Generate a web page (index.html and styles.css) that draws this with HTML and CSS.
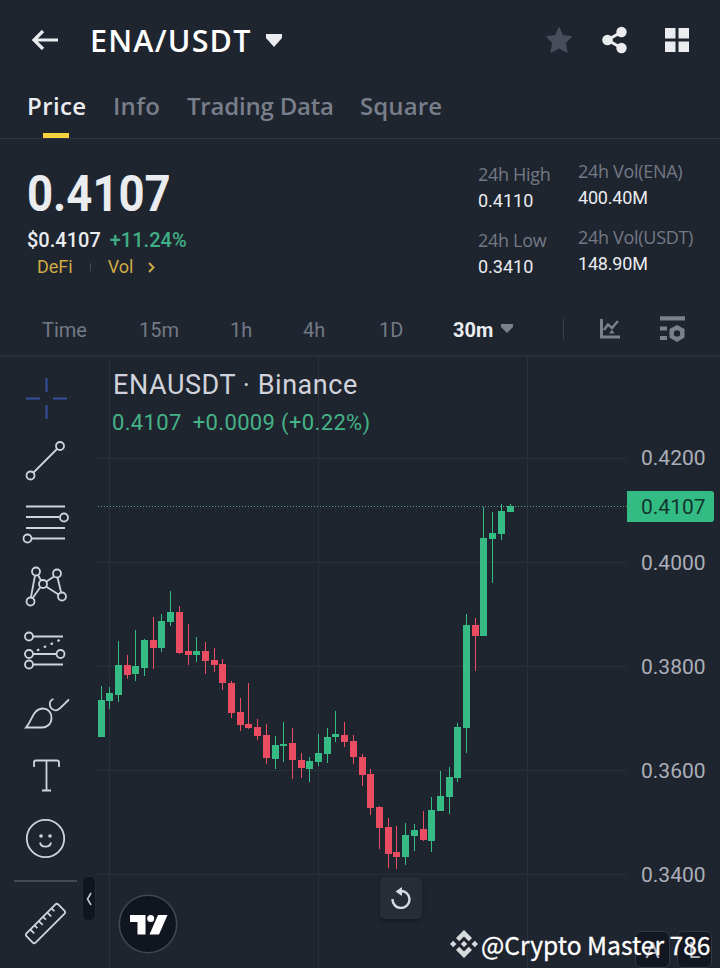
FILE: index.html
```html
<!DOCTYPE html>
<html lang="en">
<head>
  <meta charset="UTF-8" />
  <meta name="viewport" content="width=device-width, initial-scale=1" />
  <title>ENA/USDT</title>
  <link rel="stylesheet" href="styles.css">
</head>
<body>
  <header class="top-bar">
    <svg class="back" viewBox="0 0 28 20" aria-label="Back"><path d="M12 1 L3 10 L12 19 M3 10 H27" /></svg>
    <h1>ENA/USDT</h1>
    <svg class="caret" viewBox="0 0 16 13" aria-hidden="true"><path d="M0 0H16V4L8 13L0 4Z" /></svg>
    <div class="actions">
      <svg class="star" viewBox="0 0 28 28"><path d="M14 2 L17.5 9.8 L26 10.7 L20 16.6 L21.8 26 L14 21.5 L6.2 26 L8 16.6 L2 10.7 L10.5 9.8Z" /></svg>
      <svg class="share" viewBox="0 0 28 28"><path d="M20.5 6 L6.500 14 L20.500 22" /><circle cx="6.500" cy="14" r="5.300" /><circle cx="20.500" cy="6" r="5.200" /><circle cx="20.500" cy="22" r="5.200" /></svg>
      <svg class="apps" viewBox="0 0 24 24"><path d="M0 0H10.500V10.500H0ZM13.500 0H24V10.500H13.500ZM0 13.500H10.500V24H0ZM13.500 13.500H24V24H13.500Z" /></svg>
    </div>
  </header>

  <nav class="tabs">
    <a class="tab active">Price</a>
    <a class="tab info">Info</a>
    <a class="tab trading">Trading Data</a>
    <a class="tab square">Square</a>
  </nav>

  <section class="summary">
    <div class="quote">
      <div class="price">0.4107</div>
      <div class="change"><span>$0.4107</span><span class="up">+11.24%</span></div>
      <div class="tags">
        <span>DeFi</span><i></i><span>Vol</span>
        <svg viewBox="0 0 7 11"><path d="M1 1 L5.500 5.500 L1 10" /></svg>
      </div>
    </div>
    <dl class="stats stats-price">
      <dt>24h High</dt><dd>0.4110</dd>
      <dt>24h Low</dt><dd>0.3410</dd>
    </dl>
    <dl class="stats stats-volume">
      <dt>24h Vol(ENA)</dt><dd>400.40M</dd>
      <dt>24h Vol(USDT)</dt><dd>148.90M</dd>
    </dl>
  </section>

  <nav class="intervals">
    <a>Time</a>
    <a>15m</a>
    <a>1h</a>
    <a>4h</a>
    <a>1D</a>
    <a class="selected">30m</a>
    <svg class="small-caret" viewBox="0 0 12 9"><path d="M0 0H12V3L6 9L0 3Z" /></svg>
    <i class="divider"></i>
    <svg class="chart-icon" viewBox="0 0 20 20"><path d="M1.500 0V18H20" /><path class="thin" d="M4 11L8 5.500L12 9L18 2" /><path class="fill" d="M9 14.500L12 10.500L14.500 14.500Z" /></svg>
    <svg class="settings-icon" viewBox="0 0 25 26"><path d="M0 2.300H25M0 12.500H7M0 22H7" /><path class="nut" d="M17 9L24.500 13V21.500L17 26L9.500 21.500V13Z" /><circle cx="17" cy="17.400" r="3.200" /></svg>
  </nav>

  <main class="chart">
    <aside class="tools">
      <svg viewBox="0 0 100 611">
        <path class="cross" d="M46.500 21V35M46.500 48V62M26 41.500H40M53 41.500H67" />
        <!-- trend line -->
        <path d="M33.500 115.500L57.500 91.500" /><circle cx="30.500" cy="118.500" r="4" /><circle cx="60" cy="89" r="4" />
        <!-- fib retracement -->
        <path d="M26 149.500H65M26 160H59.500M26 171H65M31.500 181.500H65" /><circle cx="64" cy="160.500" r="4" /><circle cx="27.500" cy="181.500" r="4" />
        <!-- pattern -->
        <path d="M35 218.500L31 240M38 218L41 223.500M46.500 224.500L54 219.500M57.500 220.500L61 235M46 229.500L58.500 237.500M40.500 230L33 240.500" />
        <circle cx="36" cy="214.500" r="4" /><circle cx="57" cy="216.500" r="4" /><circle cx="43" cy="227" r="4" /><circle cx="30.500" cy="244.500" r="4" /><circle cx="62" cy="239.500" r="4" />
        <!-- position -->
        <path d="M33 279.500H63M33 297H56M33 307.500H63" /><path class="dots" d="M37 293.500L62 282" />
        <circle cx="29" cy="279.500" r="4" /><circle cx="29" cy="297" r="4" /><circle cx="60.500" cy="297" r="4" /><circle cx="29" cy="307.500" r="4" />
        <!-- brush -->
        <path d="M26 370.500C32 364 33 351.500 43 351.500C48 351.500 51.500 355.500 51.500 361C51.500 367 47 370.500 42 370.500Z" />
        <path d="M53.500 342C48 344 49 351 54 353C58 354.500 60 351 69 342.500" />
        <!-- text -->
        <path d="M34 410V405.500Q34 403.500 36 403.500H57Q59 403.500 59 405.500V410M46.500 403.500V433.500M42 433.500H51" />
        <!-- emoji -->
        <circle cx="45.500" cy="481.500" r="18.700" /><path d="M40 485.500C41 491 50 491 51 485.500" /><circle class="eye" cx="41" cy="479" r="1.800" /><circle class="eye" cx="50" cy="479" r="1.800" />
        <path class="rule" d="M14 524H77" />
        <!-- ruler -->
        <g transform="translate(45.500 566.500) rotate(-45)"><rect x="-22.500" y="-6.500" width="45" height="13" rx="2" /><path d="M-15 -6.500V-1M-9 -6.500V-2.500M-3 -6.500V-1M3 -6.500V-2.500M9 -6.500V-1M15 -6.500V-2.500" /></g>
      </svg>
    </aside>
    <div class="plot">
      <svg id="candles" viewBox="98 357 622 611">
        <path class="grid" d="M98 458.500H627M98 562.500H627M98 666.500H627M98 770.500H627M98 874.500H627M109.500 357V968M318.500 357V968M527.500 357V968" />
        <path class="last-line" d="M98 506.500H627" />
        <g id="series"></g>
        <g class="axis">
          <text x="641" y="465">0.4200</text>
          <text x="641" y="569.500">0.4000</text>
          <text x="641" y="673.500">0.3800</text>
          <text x="641" y="777.500">0.3600</text>
          <text x="641" y="882">0.3400</text>
        </g>
        <path class="last-tag" d="M627 491H711Q714 491 714 494V519Q714 522 711 522H627Z" />
        <text class="last-text" x="641" y="514">0.4107</text>
      </svg>
    </div>
    <div class="legend">
      <div class="symbol">ENAUSDT · Binance</div>
      <div class="ohlc"><span>0.4107</span><span>+0.0009 (+0.22%)</span></div>
    </div>
    <div class="collapse"><svg viewBox="0 0 6 14"><path d="M5 1L1.500 7L5 13" /></svg></div>
    <svg class="tv-logo" viewBox="0 0 60 60"><circle class="disc" cx="30" cy="30" r="28.700" /><path d="M12 21H27.500V40.500H19.500V28H12ZM40 21H49.500L41 40.500H31.500Z" /><circle cx="32.700" cy="24.500" r="3.500" /></svg>
    <button class="reset" aria-label="Reset chart"><svg viewBox="0 0 20 22"><path d="M1.500 12A8.500 8.500 0 1 0 9 4" /><path class="tip" d="M11 0V9L4.500 4.500Z" /></svg></button>
    <div class="scale-buttons"><span>A</span><span>L</span></div>
    <div class="watermark">
      <svg viewBox="0 0 28 28"><path d="M14 0L22 8L18.800 11.200L14 6.400L9.200 11.200L6 8ZM14 28L22 20L18.800 16.800L14 21.600L9.200 16.800L6 20ZM14 10.800L17.200 14L14 17.200L10.800 14ZM3.200 10.800L6.400 14L3.200 17.200L0 14ZM24.800 10.800L28 14L24.800 17.200L21.600 14Z" /></svg>
      <span>@Crypto Master 786</span>
    </div>
  </main>
  <script src="chart.js"></script>
</body>
</html>
```
FILE: styles.css
```css
* {
  margin: 0;
  padding: 0;
  box-sizing: border-box;
}
body {
  width: 720px;
  height: 968px;
  overflow: hidden;
  background: #1f252f;
  color: #eaecef;
  font-family: Roboto, sans-serif;
}
svg {
  display: block;
  flex: none;
}

/* Top bar */
.top-bar {
  display: flex;
  align-items: center;
  height: 80px;
  padding: 0 31px;
}
.back {
  width: 28px;
  height: 20px;
  fill: none;
  stroke: #eaecef;
  stroke-width: 3.2;
}
.top-bar h1 {
  width: 162px;
  margin: 0 0 0 31px;
  font: 600 30.5px/40px "Open Sans", sans-serif;
  letter-spacing: 1.2px;
  color: #fff;
  white-space: nowrap;
}
.caret {
  width: 16px;
  height: 13px;
  margin-left: 14px;
  fill: #eaecef;
}
.actions {
  display: flex;
  align-items: center;
  margin-left: auto;
}
.actions svg {
  width: 28px;
  height: 28px;
}
.star {
  fill: #474d5b;
  stroke: #474d5b;
  stroke-width: 1.5;
  stroke-linejoin: round;
}
.share {
  margin-left: 28px;
  fill: #eaecef;
}
.share path {
  fill: none;
  stroke: #eaecef;
  stroke-width: 3;
}
.actions .apps {
  width: 24px;
  height: 24px;
  margin-left: 36px;
  fill: #eaecef;
}

/* Tabs */
.tabs {
  display: flex;
  height: 59px;
  padding-left: 27px;
  gap: 27px;
  border-bottom: 1px solid #303640;
  font: 600 24px/52px "Open Sans", sans-serif;
  color: #787e8a;
  white-space: nowrap;
}
.tab.active {
  width: 59px;
  letter-spacing: 0.4px;
  color: #eaecef;
}
.tab.active::after {
  content: "";
  display: block;
  width: 26px;
  height: 5px;
  margin: 1px 0 0 16px;
  background: #f5d33f;
}
.tab.info {
  width: 47px;
  letter-spacing: 0.3px;
}
.tab.trading {
  width: 146px;
  letter-spacing: -0.2px;
}
.tab.square {
  letter-spacing: 0.1px;
}

/* Price summary */
.summary {
  display: flex;
  height: 164px;
  padding-left: 27px;
}
.quote {
  width: 451px;
  padding-top: 27px;
}
.price {
  font-size: 50px;
  font-weight: 700;
  line-height: 56px;
  transform: scaleX(0.91);
  transform-origin: left;
}
.change {
  display: flex;
  gap: 9px;
  margin-top: 6px;
  font-size: 20px;
  font-weight: 500;
  line-height: 24px;
}
.up {
  color: #3fae84;
}
.tags {
  display: flex;
  align-items: center;
  margin: 3px 0 0 10px;
  font-size: 18px;
  line-height: 24px;
  color: #cfab45;
}
.tags i {
  width: 1px;
  height: 8px;
  margin: 0 17px;
  background: #424954;
}
.tags svg {
  width: 7px;
  height: 11px;
  margin-left: 15px;
  fill: none;
  stroke: #cfab45;
  stroke-width: 2;
}
.stats {
  width: 100px;
  padding-top: 22px;
  white-space: nowrap;
}
.stats-volume {
  width: 130px;
  padding-top: 19px;
}
.stats dt {
  font: 18px/26px "Open Sans", sans-serif;
  letter-spacing: -0.3px;
  color: #737985;
}
.stats dd {
  margin-bottom: 13px;
  font-size: 18px;
  line-height: 27px;
}
.stats-volume dd {
  letter-spacing: -0.2px;
}

/* Interval picker */
.intervals {
  display: flex;
  align-items: center;
  height: 54px;
  padding-left: 42px;
  border-bottom: 2px solid #272e38;
  font-size: 20px;
  color: #737985;
}
.intervals a {
  padding-top: 2px;
}
.intervals a:nth-child(1) {
  width: 97px;
}
.intervals a:nth-child(2) {
  width: 91px;
}
.intervals a:nth-child(3) {
  width: 73px;
}
.intervals a:nth-child(4) {
  width: 76px;
}
.intervals a:nth-child(5) {
  width: 74px;
}
.intervals .selected {
  width: 48px;
  font-weight: 700;
  color: #eaecef;
}
.small-caret {
  width: 12px;
  height: 9px;
  margin-top: -2px;
  fill: #7b818c;
}
.divider {
  width: 1px;
  height: 21px;
  margin: 0 36px 0 50px;
  background: #3b424d;
}
.chart-icon {
  width: 20px;
  height: 20px;
  fill: none;
  stroke: #7b818c;
  stroke-width: 3;
}
.chart-icon .thin {
  stroke-width: 2.4;
}
.chart-icon .fill {
  fill: #7b818c;
  stroke: none;
}
.settings-icon {
  width: 25px;
  height: 26px;
  margin-left: 40px;
  fill: #1f252f;
  stroke: #7b818c;
  stroke-width: 4.2;
}
.settings-icon .nut {
  fill: #7b818c;
  stroke: none;
}
.settings-icon circle {
  stroke: none;
}

/* Chart */
.chart {
  position: relative;
  display: flex;
  height: 611px;
}
.tools {
  width: 98px;
}
.tools svg {
  width: 100px;
  height: 611px;
  fill: none;
  stroke: #d0d3dc;
  stroke-width: 1.8;
}
.tools .cross {
  stroke: #3450a0;
  stroke-width: 2;
}
.tools .dots {
  stroke-width: 2.2;
  stroke-dasharray: 2.5 5;
}
.tools .eye {
  fill: #d0d3dc;
  stroke: none;
}
.tools .rule {
  stroke: #434853;
  stroke-width: 2;
}
.plot svg {
  width: 622px;
  height: 611px;
}
.grid {
  stroke: #29303a;
  fill: none;
}
.last-line {
  stroke: #5a9c85;
  stroke-dasharray: 1 2;
}
.up-candle {
  fill: #37bb85;
}
.down-candle {
  fill: #ea4c62;
}
.axis text,
.last-text {
  font-size: 21px;
  fill: #acafb8;
}
.last-tag {
  fill: #33bb84;
}
.plot .last-text {
  fill: #13352f;
}
.legend {
  position: absolute;
  left: 112px;
  top: 12px;
  white-space: nowrap;
}
.symbol {
  padding-left: 1px;
  font-size: 27px;
  line-height: 32px;
  letter-spacing: 0.55px;
  color: #d0d3dc;
}
.ohlc {
  display: flex;
  gap: 11px;
  margin-top: 8px;
  font-size: 22px;
  line-height: 28px;
  letter-spacing: 0.35px;
  color: #45b287;
}
.collapse {
  position: absolute;
  left: 82px;
  top: 519px;
  display: flex;
  align-items: center;
  justify-content: center;
  width: 14px;
  height: 45px;
  border-radius: 6px;
  border: 1px solid #232a34;
  background: #10151f;
}
.collapse svg {
  width: 6px;
  height: 14px;
  fill: none;
  stroke: #c6c9d1;
  stroke-width: 1.6;
}
.tv-logo {
  position: absolute;
  left: 118px;
  top: 537px;
  width: 60px;
  height: 60px;
  fill: #fff;
}
.tv-logo .disc {
  fill: #10151f;
  stroke: #434651;
  stroke-width: 1.6;
}
.reset {
  position: absolute;
  left: 380px;
  top: 520px;
  display: flex;
  align-items: center;
  justify-content: center;
  width: 42px;
  height: 42px;
  border: 0;
  border-radius: 5px;
  background: #272d37;
  box-shadow: 0 2px 4px rgba(0, 0, 0, 0.35);
}
.reset svg {
  width: 20px;
  height: 22px;
  fill: none;
  stroke: #d9dbe2;
  stroke-width: 2.4;
}
.reset .tip {
  fill: #d9dbe2;
  stroke: none;
}
.scale-buttons {
  position: absolute;
  left: 635px;
  top: 574px;
  display: flex;
  gap: 7px;
}
.scale-buttons span {
  width: 35px;
  height: 37px;
  border: 1px solid #333844;
  border-radius: 6px;
  background: #121721;
  color: #b2b5be;
  font-size: 22px;
  line-height: 37px;
  text-align: center;
}
.watermark {
  position: absolute;
  left: 450px;
  top: 569px;
  display: flex;
  align-items: center;
  gap: 3px;
  font: 400 24.6px/36px "Noto Sans CJK SC", sans-serif;
  color: #fff;
  -webkit-text-stroke: 0.3px #fff;
  white-space: nowrap;
}
.watermark svg {
  width: 28px;
  height: 28px;
  fill: #d7d9dd;
}
```
FILE: chart.js
```js
// x, body top, body bottom, wick top, wick bottom, direction
const candles = [
  [101, 700, 737, 686, 737, 1], [109, 693, 701, 687, 709, 1], [118, 665, 695, 641, 702, 1],
  [127, 665, 675, 655, 679, 0], [135, 666, 674, 630, 681, 1], [144, 640, 668, 639, 676, 1],
  [153, 640, 648, 617, 669, 0], [161, 621, 648, 614, 652, 1], [170, 612, 622, 591, 626, 1],
  [179, 612, 653, 606, 654, 0], [188, 651, 655, 624, 665, 0], [196, 651, 655, 637, 662, 1],
  [205, 651, 661, 642, 674, 0], [214, 660, 665, 648, 672, 0], [222, 664, 683, 659, 690, 0],
  [231, 683, 713, 681, 718, 0], [240, 712, 725, 698, 731, 0], [248, 724, 728, 683, 729, 0],
  [257, 727, 736, 719, 740, 0], [266, 735, 758, 724, 764, 0], [275, 745, 759, 736, 769, 1],
  [283, 744, 746, 722, 762, 1], [292, 743, 760, 728, 779, 0], [301, 760, 768, 753, 778, 0],
  [309, 761, 769, 757, 782, 1], [318, 753, 762, 734, 766, 1], [327, 737, 754, 728, 763, 1],
  [335, 734, 737, 711, 742, 1], [344, 735, 742, 722, 747, 0], [353, 741, 757, 735, 764, 0],
  [362, 757, 775, 754, 786, 0], [370, 774, 808, 769, 815, 0], [379, 807, 828, 806, 849, 0],
  [388, 827, 854, 818, 868, 0], [396, 852, 857, 826, 869, 0], [405, 835, 857, 823, 865, 1],
  [414, 830, 836, 824, 851, 1], [423, 829, 840, 811, 841, 0], [431, 810, 841, 797, 852, 1],
  [440, 796, 811, 771, 811, 1], [449, 777, 797, 767, 814, 1], [457, 727, 778, 723, 782, 1],
  [466, 625, 728, 614, 753, 1], [475, 625, 636, 618, 671, 0], [483, 538, 636, 507, 636, 1],
  [492, 533, 539, 512, 583, 1], [501, 511, 534, 504, 540, 1], [510, 506, 512, 504, 512, 1]
];

const series = document.getElementById('series');

function addRect(x, y, width, height, up) {
  const rect = document.createElementNS('http://www.w3.org/2000/svg', 'rect');
  rect.setAttribute('x', x);
  rect.setAttribute('y', y);
  rect.setAttribute('width', width);
  rect.setAttribute('height', height);
  rect.setAttribute('class', up ? 'up-candle' : 'down-candle');
  series.appendChild(rect);
}

candles.forEach(([x, top, bottom, high, low, up]) => {
  addRect(x, high, 1, low - high, up);
  addRect(x - 3, top, 7, bottom - top, up);
});
```
